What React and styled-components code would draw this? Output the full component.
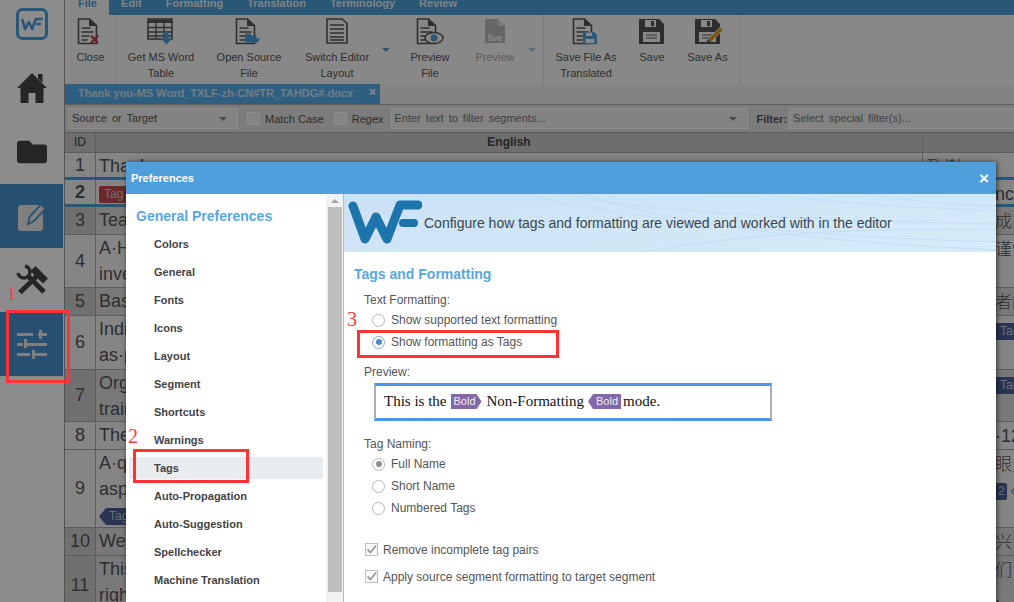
import styled, { createGlobalStyle } from 'styled-components'
import { FaFolder } from 'react-icons/fa'

const GlobalStyle = createGlobalStyle`
	html, body {
		margin: 0;
		padding: 0;
		background: #fff;
		overflow: hidden;
	}
	body {
		font-family: 'Liberation Sans', Arial, sans-serif;
	}
`

const Page = styled.div`
	position: relative;
	display: flex;
	width: 1014px;
	height: 602px;
	overflow: hidden;
	background: #fff;
`
const Overlay = styled.div`
	position: absolute;
	inset: 0;
	background: rgba(0, 0, 0, 0.45);
`

/* left rail */
const Rail = styled.div`
	flex: 0 0 63px;
	display: flex;
	flex-direction: column;
	background: #fff;
	margin-right: 2px;
	box-shadow: 1px 0 0 #fff, 2px 0 0 #999;
`
const RailLogo = styled.div`
	height: 56px;
	display: flex;
	justify-content: center;
	padding-top: 8px;
	box-sizing: border-box;
`
const RailItem = styled.div`
	height: 64px;
	display: flex;
	align-items: center;
	justify-content: center;
	color: ${props => (props.$active ? '#e8e8e8' : '#444')};
	background: ${props => (props.$active ? '#4791ca' : 'transparent')};
`

/* right side */
const Main = styled.div`
	flex: 1;
	min-width: 0;
	display: flex;
	flex-direction: column;
`
const MenuBar = styled.div`
	height: 15px;
	flex: none;
	display: flex;
	background: #4c9ed8;
	overflow: hidden;
`
const MenuTab = styled.div`
	padding: 0 12px;
	height: 15px;
	font-size: 11px;
	font-weight: bold;
	line-height: 7px;
	color: ${props => (props.$active ? '#4c9ed8' : '#e6eef5')};
	background: ${props => (props.$active ? '#f8f8f8' : 'transparent')};
	&:first-child {
		padding-left: 13px;
	}
`
const Ribbon = styled.div`
	height: 69px;
	flex: none;
	display: flex;
	background: #f8f8f8;
`
const RibbonGroup = styled.div`
	display: flex;
	border-right: 1px solid #e0e0e0;
`
const RibbonButton = styled.div`
	width: ${props => props.$w}px;
	display: flex;
	flex-direction: column;
	align-items: center;
	padding-top: 3px;
	box-sizing: border-box;
	color: ${props => (props.$disabled ? '#aaa' : '#555')};
`
const IconSlot = styled.div`
	height: 28px;
	display: flex;
	align-items: flex-start;
`
const RibbonLabel = styled.div`
	margin-top: 3px;
	font-size: 11px;
	line-height: 16px;
	text-align: center;
	white-space: pre-line;
	color: inherit;
`
const DropArrow = styled.div`
	width: ${props => props.$w}px;
	display: flex;
	justify-content: center;
	padding-top: 33px;
	box-sizing: border-box;
	&::after {
		content: '';
		width: 0;
		height: 0;
		border-left: 4px solid transparent;
		border-right: 4px solid transparent;
		border-top: 4px solid ${props => props.$color};
	}
`
const DocTabs = styled.div`
	height: 20px;
	flex: none;
	display: flex;
	background: #eeeeee;
`
const DocTab = styled.div`
	position: relative;
	width: 315px;
	box-sizing: border-box;
	padding-left: 13px;
	font-size: 11px;
	font-weight: bold;
	line-height: 19px;
	color: #d0e2ee;
	background: #56aeea;
`
const DocClose = styled.span`
	position: absolute;
	right: 4px;
	top: -1px;
	font-size: 12px;
	color: #fff;
`
const FilterBar = styled.div`
	height: 29px;
	flex: none;
	display: flex;
	align-items: center;
	box-sizing: border-box;
	padding-left: 3px;
	background: #e2e2e2;
	border-top: 1px solid #aaa;
	border-bottom: 1px solid #aaa;
	font-size: 11px;
	color: #555;
`
const Field = styled.div`
	position: relative;
	flex: none;
	width: ${props => props.$w}px;
	height: 21px;
	box-sizing: border-box;
	margin-right: ${props => props.$mr || 0}px;
	padding-left: 3px;
	border: 1px solid #fff;
	background: #eee;
	line-height: 19px;
	word-spacing: 2px;
	color: ${props => (props.$muted ? '#777' : '#555')};
	&::after {
		content: ${props => (props.$arrow ? "''" : 'none')};
		position: absolute;
		right: 10px;
		top: 8px;
		border-left: 4px solid transparent;
		border-right: 4px solid transparent;
		border-top: 4px solid #888;
	}
`
const FilterCheck = styled.span`
	flex: none;
	width: 13px;
	height: 13px;
	box-sizing: border-box;
	border: 1px solid #fff;
	background: #eee;
	margin-right: 5px;
`
const FilterLabel = styled.span`
	flex: none;
	margin-right: ${props => props.$mr}px;
	font-weight: ${props => (props.$bold ? 'bold' : 'normal')};
`

/* segment table */
const Table = styled.div`
	flex: 1;
	min-height: 0;
	overflow: hidden;
`
const Row = styled.div`
	display: grid;
	grid-template-columns: 31px 827px 1fr;
	height: ${props => props.$h}px;
	box-sizing: border-box;
	border-bottom: ${props => props.$line || '1px solid #aaa'};
	background: ${props => (props.$shade ? '#dcdcdc' : '#f2f2f2')};
`
const HeadRow = styled(Row)`
	background: #c8c8c8;
	font-size: 12px;
	line-height: 18px;
	color: #444;
	text-align: center;
`
const HeadCell = styled.div`
	border-right: 1px solid #aaa;
	font-weight: ${props => (props.$bold ? 'bold' : 'normal')};
	&:last-child {
		border-right: 0;
	}
`
const IdCell = styled.div`
	display: flex;
	align-items: center;
	justify-content: center;
	border-right: 1px solid #aaa;
	font-size: 18px;
	font-weight: ${props => (props.$bold ? 'bold' : 'normal')};
	color: #555;
	background: ${props => (props.$shade ? '#cccccc' : '#f2f2f2')};
`
const TextCell = styled.div`
	padding: 0 3px;
	border-right: 1px solid #aaa;
	font-size: 18px;
	line-height: 26px;
	color: #555;
	white-space: nowrap;
	overflow: hidden;
	&:last-child {
		border-right: 0;
		padding-left: 4px;
		font-family: 'Noto Sans CJK SC', 'Liberation Sans', sans-serif;
		font-size: 17px;
		font-weight: 300;
		line-height: 26px;
	}
`
const Latin = styled.span`
	font-family: 'Liberation Sans', Arial, sans-serif;
	font-size: 18px;
`
const SegmentTag = styled.span`
	display: inline-block;
	height: 17px;
	padding: 0 ${props => (props.$tight ? 2 : 5)}px 0 ${props => (props.$left ? 10 : props.$tight ? 3 : 5)}px;
	border-radius: 2px;
	background: ${props => props.$color};
	color: #ccc;
	font-family: 'Liberation Sans', Arial, sans-serif;
	font-size: 12px;
	font-weight: normal;
	line-height: 17px;
	vertical-align: 1px;
	clip-path: ${props =>
		props.$left ? 'polygon(7px 0, 100% 0, 100% 100%, 7px 100%, 0 50%)' : 'none'};
`

/* preferences dialog */
const Dialog = styled.div`
	position: absolute;
	left: 126px;
	top: 162px;
	width: 870px;
	height: 440px;
	display: flex;
	flex-direction: column;
	background: #fff;
	box-shadow: 1px 0 5px rgba(0, 0, 0, 0.6);
`
const DialogTitle = styled.div`
	height: 32px;
	flex: none;
	display: flex;
	align-items: center;
	justify-content: space-between;
	padding: 0 7px 0 5px;
	background: #4e9fdb;
	color: #fff;
	font-size: 11px;
	font-weight: bold;
`
const CloseMark = styled.span`
	font-size: 17px;
	line-height: 17px;
`
const DialogBody = styled.div`
	flex: 1;
	min-height: 0;
	display: flex;
`
const NavPane = styled.div`
	flex: 0 0 200px;
	padding-top: 12px;
	box-sizing: border-box;
`
const NavHeading = styled.div`
	height: 27px;
	padding-left: 10px;
	font-size: 14px;
	font-weight: bold;
	line-height: 20px;
	color: #5aa6e0;
`
const NavItem = styled.div`
	height: 22px;
	margin: 0 3px 6px 3px;
	padding-left: 25px;
	font-size: 11px;
	font-weight: bold;
	line-height: 22px;
	color: #444;
	background: ${props => (props.$active ? '#e9ecef' : 'transparent')};
`
const ScrollTrack = styled.div`
	flex: 0 0 18px;
	display: flex;
	flex-direction: column;
	align-items: center;
	padding: 5px 1px 10px 2px;
	box-sizing: border-box;
	background: #f1f1f1;
	border-right: 1px solid #bbb;
	&::before {
		content: '';
		border-left: 4px solid transparent;
		border-right: 4px solid transparent;
		border-bottom: 4px solid #a3a3a3;
		margin-bottom: 4px;
	}
`
const ScrollThumb = styled.div`
	flex: 1;
	width: 100%;
	background: #bebebe;
`
const Content = styled.div`
	flex: 1;
	min-width: 0;
	display: flex;
	flex-direction: column;
`
const Banner = styled.div`
	position: relative;
	height: 58px;
	flex: none;
	display: flex;
	align-items: center;
	overflow: hidden;
	background: linear-gradient(170deg, #cbe0f3 0%, #d0e5f5 40%, #d6ecf9 100%);
	color: #3d4650;
	font-size: 14px;
`
const BannerLines = styled.svg`
	position: absolute;
	inset: 0;
`
const BannerLogo = styled.svg`
	position: relative;
	flex: none;
	margin: 0 2px;
`
const BannerText = styled.span`
	position: relative;
`
const Form = styled.div`
	padding: 14px 0 0 10px;
	color: #555;
	font-size: 12px;
`
const SectionTitle = styled.div`
	font-size: 14px;
	font-weight: bold;
	line-height: 16px;
	color: #5aa6e0;
	margin-bottom: 10px;
`
const FieldLabel = styled.div`
	line-height: 16px;
	margin: ${props => props.$m || '0'};
	padding-left: 10px;
`
const RadioRow = styled.div`
	display: flex;
	align-items: center;
	height: 22px;
	padding-left: 18px;
`
const Radio = styled.span`
	position: relative;
	width: 13px;
	height: 13px;
	box-sizing: border-box;
	margin-right: 6px;
	border-radius: 50%;
	border: 1px solid ${props => (props.$on === 'blue' ? '#7ea6d8' : '#b5b5b5')};
	background: #fff;
	&::after {
		content: ${props => (props.$on ? "''" : 'none')};
		position: absolute;
		left: 2.5px;
		top: 2.5px;
		width: 6px;
		height: 6px;
		border-radius: 50%;
		background: ${props => (props.$on === 'blue' ? '#4f84cf' : '#8d8d8d')};
	}
`
const PreviewBox = styled.div`
	width: 398px;
	height: 38px;
	box-sizing: border-box;
	margin: 3px 0 15px 20px;
	padding-left: 8px;
	border-top: 3px solid #4a97ee;
	border-bottom: 3px solid #4a97ee;
	border-left: 2px solid #a9aeb5;
	border-right: 2px solid #a9aeb5;
	font-family: 'Liberation Serif', 'Times New Roman', serif;
	font-size: 15px;
	line-height: 31px;
	color: #111;
	white-space: nowrap;
`
const BoldTag = styled.span`
	display: inline-block;
	height: 15px;
	margin: ${props => (props.$close ? '0 2px 0 4px' : '0 5px 0 4px')};
	padding: ${props => (props.$close ? '0 3px 0 8px' : '0 6px 0 3px')};
	background: #8468aa;
	color: #eee;
	font-family: 'Liberation Sans', Arial, sans-serif;
	font-size: 11px;
	line-height: 15px;
	vertical-align: 1px;
	clip-path: ${props =>
		props.$close
			? 'polygon(5px 0, 100% 0, 100% 100%, 5px 100%, 0 50%)'
			: 'polygon(0 0, calc(100% - 5px) 0, 100% 50%, calc(100% - 5px) 100%, 0 100%)'};
`
const CheckRow = styled.div`
	display: flex;
	align-items: center;
	height: 27px;
	padding-left: 11px;
	margin-top: ${props => props.$mt || 0}px;
`
const CheckBox = styled.svg`
	flex: none;
	margin-right: 5px;
`

/* red markup drawn on top of the screenshot */
const MarkBox = styled.div`
	position: absolute;
	left: ${props => props.$x}px;
	top: ${props => props.$y}px;
	width: ${props => props.$w}px;
	height: ${props => props.$h}px;
	box-sizing: border-box;
	border: 3px solid #ff3333;
`
const MarkNumber = styled.span`
	position: absolute;
	left: ${props => props.$x}px;
	top: ${props => props.$y}px;
	font-family: 'Liberation Serif', serif;
	font-size: ${props => props.$size}px;
	line-height: 1;
	color: #ff3b3b;
`

const WfSmall = () => (
	<svg width="32" height="32" viewBox="0 0 32 32" fill="none">
		<rect x="1.5" y="1.5" width="29" height="29" rx="5" stroke="#4e9fdb" strokeWidth="3" />
		<path d="M6 11l3.2 10 3.6-7 3.4 7 3.6-10h7M20 16h5" stroke="#4e9fdb" strokeWidth="2.6" strokeLinejoin="round" />
	</svg>
)
const HomeIcon = () => (
	<svg width="30" height="30" viewBox="0 0 30 30" fill="currentColor">
		<path d="M15 0L30 15h-3.500v15h-8V20h-7v10h-8V15H0z" />
		<path d="M21 1h4.500v9L21 5.500z" />
	</svg>
)
const EditIcon = () => (
	<svg width="30" height="30" viewBox="0 0 30 30">
		<rect x="1" y="4" width="25" height="26" rx="3" fill="#e8e8e8" />
		<path d="M11 23l1.500-7L24 3.500l4.500 4L17 20z" fill="#e8e8e8" stroke="#4791ca" strokeWidth="1.800" />
	</svg>
)
const ToolsIcon = () => (
	<svg width="32" height="32" viewBox="0 0 32 32" fill="none" stroke="#444">
		<path d="M28 28L11.500 11.500" strokeWidth="5" />
		<path d="M9 2A6 6 0 1 1 2 9" strokeWidth="3.500" />
		<path d="M4 28.500L22 11" strokeWidth="5" />
		<path d="M19.500 2l-5 5L27 19.500l5-5z" fill="#444" stroke="none" />
	</svg>
)
const SlidersIcon = () => (
	<svg width="30" height="30" viewBox="0 0 30 30" fill="#e8e8e8">
		<rect x="0" y="4" width="16" height="3" />
		<rect x="21" y="4" width="9" height="3" />
		<rect x="22" y="1" width="3" height="9" />
		<rect x="0" y="14" width="6" height="3" />
		<rect x="7" y="10" width="3" height="9" />
		<rect x="10" y="14" width="20" height="3" />
		<rect x="0" y="24" width="13" height="3" />
		<rect x="18" y="24" width="12" height="3" />
		<rect x="15" y="21" width="3" height="9" />
	</svg>
)

const INK = '#555'
const Doc = ({ children, lines = true }) => (
	<svg width="32" height="27" viewBox="0 0 32 27" fill="none">
		<path d="M3.500 1h11l7 6.500v18h-18z" stroke={INK} strokeWidth="1.600" />
		<path d="M14 1v7h7.500z" fill={INK} />
		{lines && <path d="M6.500 10h9M6.500 14h12M6.500 18h8M6.500 22h6" stroke={INK} strokeWidth="1.500" />}
		{children}
	</svg>
)
const CloseDoc = () => (
	<Doc>
		<path d="M16 17.500l7 7.500M23 17.500l-7 7.500" stroke="#c0394b" strokeWidth="2.400" />
	</Doc>
)
const TableIcon = () => (
	<svg width="28" height="27" viewBox="0 0 28 27" fill="none">
		<rect x="1" y="1" width="24" height="20" stroke={INK} strokeWidth="1.600" />
		<path d="M1 2h24v3H1z" fill={INK} />
		<path d="M1 9.500h24M1 14h24M1 18h24M9 5v16M17 5v16" stroke={INK} strokeWidth="1.300" />
		<path d="M17 14h4.500v6h4l-6 6.500-6-6.500h4z" fill="#4e9fdb" />
	</svg>
)
const OpenIcon = () => (
	<Doc>
		<path d="M12 24.500v-9h5l1.500 2h5v3h4l-3 4z" fill="#4e9fdb" />
	</Doc>
)
const LayoutIcon = () => (
	<svg width="26" height="27" viewBox="0 0 26 27" fill="none">
		<path d="M3 1h15l5 4.500V25H3z" stroke={INK} strokeWidth="1.600" />
		<path d="M6 7h14M6 11h14M6 15h14M6 19h14M6 22h14" stroke={INK} strokeWidth="1.700" />
	</svg>
)
const PreviewIcon = () => (
	<Doc>
		<ellipse cx="20" cy="20" rx="9" ry="5.500" fill="#f8f8f8" stroke={INK} strokeWidth="1.500" />
		<circle cx="20" cy="20" r="3.400" fill="#4e9fdb" />
	</Doc>
)
const LiveIcon = () => (
	<svg width="28" height="27" viewBox="0 0 28 27">
		<path d="M4 1h13l7 6.500V25H4z" fill="#bbb" />
		<path d="M17 1v7h7z" fill="#fff" opacity=".5" />
		<text x="14" y="23" textAnchor="middle" fontFamily="Liberation Sans" fontWeight="bold" fontSize="8.500" fill="#f8f8f8">live</text>
	</svg>
)
const SaveAsDoc = () => (
	<Doc>
		<path d="M13 14h11l3 3v9H13z" fill="#4e9fdb" />
		<path d="M16 14.500h6v3.500h-6zM15.500 21h9v4h-9z" fill="#f8f8f8" />
	</Doc>
)
const Floppy = ({ children }) => (
	<svg width="30" height="27" viewBox="0 0 30 27">
		<path d="M2 1h20l5 5v20H2z" fill={INK} />
		<path d="M8 2h11v7H8z" fill="#f8f8f8" />
		<path d="M14 3h3v5h-3z" fill={INK} />
		<path d="M6 14h17v10H6z" fill="#f8f8f8" />
		<path d="M9 17h11M9 20h11" stroke={INK} strokeWidth="1.200" />
		{children}
	</svg>
)
const FloppyPen = () => (
	<Floppy>
		<path d="M15 21l12-12 3 3-12 12z" fill="#e09a1e" stroke="#f8f8f8" strokeWidth=".8" />
		<path d="M13 26l2-5 3 3z" fill={INK} />
	</Floppy>
)
const Tick = () => (
	<CheckBox width="13" height="13" viewBox="0 0 13 13" fill="none">
		<rect x=".5" y=".5" width="12" height="12" fill="#fafafa" stroke="#bdbdbd" />
		<path d="M2.500 6.500l3 3L11 2.500" stroke="#9a9a9a" strokeWidth="1.800" />
	</CheckBox>
)

const NAV_ITEMS = [
	'Colors', 'General', 'Fonts', 'Icons', 'Layout', 'Segment', 'Shortcuts', 'Warnings',
	'Tags', 'Auto-Propagation', 'Auto-Suggestion', 'Spellchecker', 'Machine Translation',
]

const NAVY = '#4a5f95'

const App = () => (
	<Page>
		<GlobalStyle />
		<Rail>
			<RailLogo><WfSmall /></RailLogo>
			<RailItem><HomeIcon /></RailItem>
			<RailItem><FaFolder size={30} /></RailItem>
			<RailItem $active><EditIcon /></RailItem>
			<RailItem><ToolsIcon /></RailItem>
			<RailItem $active><SlidersIcon /></RailItem>
		</Rail>
		<Main>
			<MenuBar>
				<MenuTab $active>File</MenuTab>
				<MenuTab>Edit</MenuTab>
				<MenuTab>Formatting</MenuTab>
				<MenuTab>Translation</MenuTab>
				<MenuTab>Terminology</MenuTab>
				<MenuTab>Review</MenuTab>
			</MenuBar>
			<Ribbon>
				<RibbonGroup>
					<RibbonButton $w={51}><IconSlot><CloseDoc /></IconSlot><RibbonLabel>Close</RibbonLabel></RibbonButton>
				</RibbonGroup>
				<RibbonGroup>
					<RibbonButton $w={88}><IconSlot><TableIcon /></IconSlot><RibbonLabel>{'Get MS Word\nTable'}</RibbonLabel></RibbonButton>
					<RibbonButton $w={88}><IconSlot><OpenIcon /></IconSlot><RibbonLabel>{'Open Source\nFile'}</RibbonLabel></RibbonButton>
					<RibbonButton $w={88}><IconSlot><LayoutIcon /></IconSlot><RibbonLabel>{'Switch Editor\nLayout'}</RibbonLabel></RibbonButton>
					<DropArrow $w={10} $color="#4e9fdb" />
					<RibbonButton $w={78}><IconSlot><PreviewIcon /></IconSlot><RibbonLabel>{'Preview\nFile'}</RibbonLabel></RibbonButton>
					<RibbonButton $w={52} $disabled><IconSlot><LiveIcon /></IconSlot><RibbonLabel>Preview</RibbonLabel></RibbonButton>
					<DropArrow $w={22} $color="#9cc5e6" />
				</RibbonGroup>
				<RibbonGroup>
					<RibbonButton $w={84}><IconSlot><SaveAsDoc /></IconSlot><RibbonLabel>{'Save File As\nTranslated'}</RibbonLabel></RibbonButton>
					<RibbonButton $w={48}><IconSlot><Floppy /></IconSlot><RibbonLabel>Save</RibbonLabel></RibbonButton>
					<RibbonButton $w={63}><IconSlot><FloppyPen /></IconSlot><RibbonLabel>Save As</RibbonLabel></RibbonButton>
				</RibbonGroup>
			</Ribbon>
			<DocTabs>
				<DocTab>
					Thank you-MS Word_TXLF-zh-CN#TR_TAHDG#.docx
					<DocClose>×</DocClose>
				</DocTab>
			</DocTabs>
			<FilterBar>
				<Field $w={170} $mr={9} $arrow>Source or Target</Field>
				<FilterCheck />
				<FilterLabel $mr={10}>Match Case</FilterLabel>
				<FilterCheck />
				<FilterLabel $mr={7}>Regex</FilterLabel>
				<Field $w={357} $mr={9} $arrow $muted>Enter text to filter segments...</Field>
				<FilterLabel $mr={2} $bold>Filter:</FilterLabel>
				<Field $w={240} $muted>Select special filter(s)...</Field>
			</FilterBar>
			<Table>
				<HeadRow $h={20}>
					<HeadCell>ID</HeadCell>
					<HeadCell $bold>English</HeadCell>
					<HeadCell />
				</HeadRow>
				<Row $h={27} $line="3px solid #4c9ed8">
					<IdCell>1</IdCell>
					<TextCell>Thank you</TextCell>
					<TextCell>致谢</TextCell>
				</Row>
				<Row $h={27} $line="3px solid #4c9ed8">
					<IdCell $bold>2</IdCell>
					<TextCell><SegmentTag $color="#c24c4c">Tag 1</SegmentTag></TextCell>
					<TextCell>感谢使用<Latin>nc</Latin></TextCell>
				</Row>
				<Row $h={28} $shade>
					<IdCell $shade>3</IdCell>
					<TextCell>Team</TextCell>
					<TextCell>翻译团队成员</TextCell>
				</Row>
				<Row $h={53}>
					<IdCell>4</IdCell>
					<TextCell>A·Human<br />investment</TextCell>
					<TextCell>人力资源谨慎</TextCell>
				</Row>
				<Row $h={28} $shade>
					<IdCell $shade>5</IdCell>
					<TextCell>Based</TextCell>
					<TextCell>基于审校者的</TextCell>
				</Row>
				<Row $h={54}>
					<IdCell>6</IdCell>
					<TextCell>Individual<br />as·part</TextCell>
					<TextCell>个人作为<SegmentTag $color={NAVY}>Tag</SegmentTag></TextCell>
				</Row>
				<Row $h={52} $shade>
					<IdCell $shade>7</IdCell>
					<TextCell>Organized<br />training</TextCell>
					<TextCell>组织培训<SegmentTag $color={NAVY}>Tag</SegmentTag></TextCell>
				</Row>
				<Row $h={28}>
					<IdCell>8</IdCell>
					<TextCell>The</TextCell>
					<TextCell>这些是第<Latin>·12</Latin></TextCell>
				</Row>
				<Row $h={78}>
					<IdCell>9</IdCell>
					<TextCell>A·quality<br />aspect<br /><SegmentTag $color={NAVY} $left>Tag</SegmentTag></TextCell>
					<TextCell>质量审查眼光<br />方面质量<SegmentTag $color={NAVY} $tight>2</SegmentTag> ‹</TextCell>
				</Row>
				<Row $h={28} $shade>
					<IdCell $shade>10</IdCell>
					<TextCell>We</TextCell>
					<TextCell>我们很高兴</TextCell>
				</Row>
				<Row $h={60} $shade>
					<IdCell $shade>11</IdCell>
					<TextCell>This<br />rights</TextCell>
					<TextCell>这条款我们<br />保留权利<Latin>,</Latin></TextCell>
				</Row>
			</Table>
		</Main>
		<Overlay />
		<Dialog>
			<DialogTitle>
				Preferences
				<CloseMark>×</CloseMark>
			</DialogTitle>
			<DialogBody>
				<NavPane>
					<NavHeading>General Preferences</NavHeading>
					{NAV_ITEMS.map(item => (
						<NavItem key={item} $active={item === 'Tags'}>{item}</NavItem>
					))}
				</NavPane>
				<ScrollTrack><ScrollThumb /></ScrollTrack>
				<Content>
					<Banner>
						<BannerLines width="652" height="58" viewBox="0 0 652 58" fill="none" stroke="#c3def5" strokeWidth="1">
							<path d="M180 0C260 20 400 40 652 48" />
							<path d="M220 0C300 16 430 26 652 30" />
							<path d="M300 58C400 40 500 34 652 36" />
							<path d="M240 0C330 30 450 46 652 56" />
							<path d="M420 0C480 8 560 14 652 16" />
							<path d="M520 0C560 6 600 10 652 12" />
						</BannerLines>
						<BannerLogo width="76" height="50" viewBox="0 0 76 50" fill="none" stroke="#1d73ab" strokeWidth="9" strokeLinecap="round" strokeLinejoin="round">
							<path d="M7 8l12 33 11-22 11 22 13-34h18" />
							<path d="M57 25h11" strokeWidth="8" />
						</BannerLogo>
						<BannerText>Configure how tags and formatting are viewed and worked with in the editor</BannerText>
					</Banner>
					<Form>
						<SectionTitle>Tags and Formatting</SectionTitle>
						<FieldLabel $m="0 0 1px">Text Formatting:</FieldLabel>
						<RadioRow><Radio />Show supported text formatting</RadioRow>
						<RadioRow><Radio $on="blue" />Show formatting as Tags</RadioRow>
						<FieldLabel $m="11px 0 0">Preview:</FieldLabel>
						<PreviewBox>
							This is the<BoldTag>Bold</BoldTag>Non-Formatting<BoldTag $close>Bold</BoldTag>mode.
						</PreviewBox>
						<FieldLabel $m="0 0 1px">Tag Naming:</FieldLabel>
						<RadioRow><Radio $on="gray" />Full Name</RadioRow>
						<RadioRow><Radio />Short Name</RadioRow>
						<RadioRow><Radio />Numbered Tags</RadioRow>
						<CheckRow $mt={17}><Tick />Remove incomplete tag pairs</CheckRow>
						<CheckRow><Tick />Apply source segment formatting to target segment</CheckRow>
					</Form>
				</Content>
			</DialogBody>
		</Dialog>
		<MarkBox $x={6} $y={310} $w={64} $h={73} />
		<MarkBox $x={133} $y={449} $w={116} $h={34} />
		<MarkBox $x={357} $y={330} $w={202} $h={28} />
		<MarkNumber $x={7} $y={285} $size={18}>1</MarkNumber>
		<MarkNumber $x={128} $y={426} $size={20}>2</MarkNumber>
		<MarkNumber $x={347} $y={309} $size={20}>3</MarkNumber>
	</Page>
)

export default App
